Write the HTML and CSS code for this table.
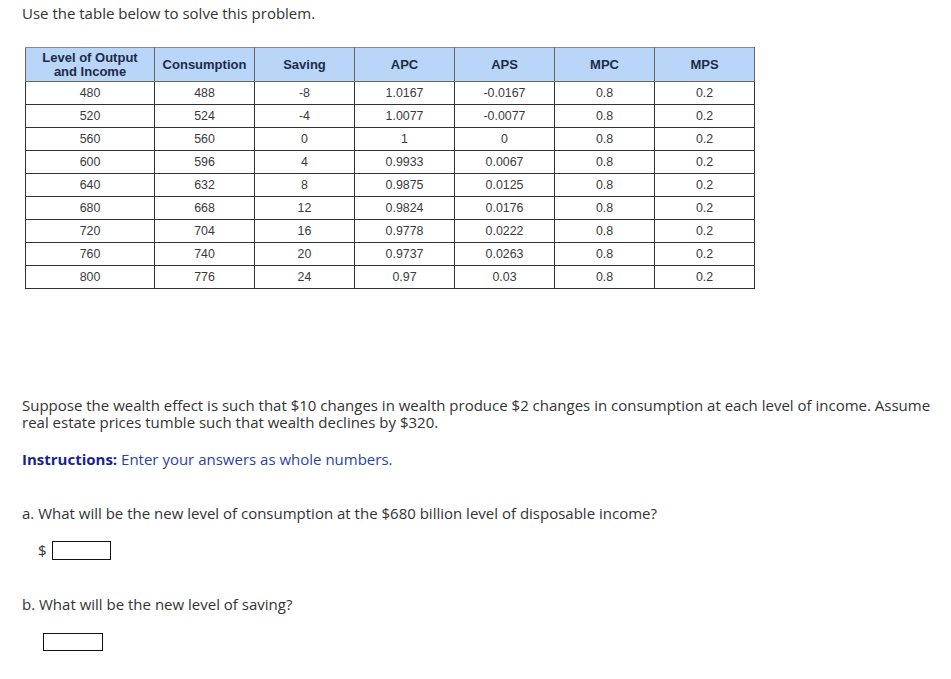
FILE: index.html
```html
<!DOCTYPE html>
<html>
<head>
<meta charset="utf-8">
<link rel="stylesheet" href="styles.css">
</head>
<body>
<div class="page">
  <p class="intro">Use the table below to solve this problem.</p>
  <table class="data">
    <thead>
      <tr>
        <th class="first">Level of Output<br>and Income</th>
        <th>Consumption</th>
        <th>Saving</th>
        <th>APC</th>
        <th>APS</th>
        <th>MPC</th>
        <th>MPS</th>
      </tr>
    </thead>
    <tbody>
      <tr><td>480</td><td>488</td><td>-8</td><td>1.0167</td><td>-0.0167</td><td>0.8</td><td>0.2</td></tr>
      <tr><td>520</td><td>524</td><td>-4</td><td>1.0077</td><td>-0.0077</td><td>0.8</td><td>0.2</td></tr>
      <tr><td>560</td><td>560</td><td>0</td><td>1</td><td>0</td><td>0.8</td><td>0.2</td></tr>
      <tr><td>600</td><td>596</td><td>4</td><td>0.9933</td><td>0.0067</td><td>0.8</td><td>0.2</td></tr>
      <tr><td>640</td><td>632</td><td>8</td><td>0.9875</td><td>0.0125</td><td>0.8</td><td>0.2</td></tr>
      <tr><td>680</td><td>668</td><td>12</td><td>0.9824</td><td>0.0176</td><td>0.8</td><td>0.2</td></tr>
      <tr><td>720</td><td>704</td><td>16</td><td>0.9778</td><td>0.0222</td><td>0.8</td><td>0.2</td></tr>
      <tr><td>760</td><td>740</td><td>20</td><td>0.9737</td><td>0.0263</td><td>0.8</td><td>0.2</td></tr>
      <tr><td>800</td><td>776</td><td>24</td><td>0.97</td><td>0.03</td><td>0.8</td><td>0.2</td></tr>
    </tbody>
  </table>

  <p class="problem">Suppose the wealth effect is such that $10 changes in wealth produce $2 changes in consumption at each level of income. Assume real estate prices tumble such that wealth declines by $320.</p>

  <p class="instructions"><strong>Instructions:</strong> Enter your answers as whole numbers.</p>

  <p class="question">a. What will be the new level of consumption at the $680 billion level of disposable income?</p>
  <div class="answer answer-a"><span class="dollar">$</span><span class="box"></span></div>

  <p class="question question-b">b. What will be the new level of saving?</p>
  <div class="answer answer-b"><span class="box"></span></div>
</div>
</body>
</html>
```

FILE: styles.css
```css
html, body {
  margin: 0;
  padding: 0;
  background: #ffffff;
}

.page {
  padding: 0 0 0 22px;
  font-family: "Open Sans", "Liberation Sans", sans-serif;
  color: #333333;
}

.intro {
  margin: 0;
  padding-top: 4px;
  font-size: 15px;
  line-height: 18px;
}

.data {
  margin: 25px 0 0 3px;
  border-collapse: collapse;
  font-family: "Liberation Sans", Arial, sans-serif;
  font-size: 12.4px;
  color: #3a3a3a;
}

.data th {
  background: #b9d5f7;
  color: #1d2b48;
  font-weight: bold;
  font-size: 13px;
  line-height: 14px;
  height: 33px;
  width: 99px;
  padding: 0;
  border: 1px solid #666666;
  border-top-color: #8a8a8a;
  text-align: center;
  vertical-align: middle;
}

.data th.first {
  width: 128px;
}

.data td {
  height: 22px;
  padding: 0;
  border: 1px solid #333333;
  text-align: center;
  vertical-align: middle;
}

.problem {
  margin: 108px 0 0 0;
  font-size: 15px;
  line-height: 17px;
  width: 922px;
}

.instructions {
  margin: 20px 0 0 0;
  font-size: 15px;
  line-height: 17px;
  color: #2b43a6;
}

.instructions strong {
  color: #1b1f96;
}

.question {
  margin: 37px 0 0 0;
  font-size: 15px;
  line-height: 17px;
}

.question-b {
  margin-top: 36px;
}

.answer {
  display: flex;
  align-items: center;
}

.answer-a {
  margin: 19px 0 0 16px;
  gap: 5px;
}

.answer-b {
  margin: 20px 0 0 21px;
}

.dollar {
  font-size: 15px;
  line-height: 19px;
}

.box {
  display: block;
  width: 57px;
  height: 17px;
  border: 1px solid #111111;
  background: #ffffff;
}

.answer-b .box {
  width: 58px;
  height: 16px;
}
```
